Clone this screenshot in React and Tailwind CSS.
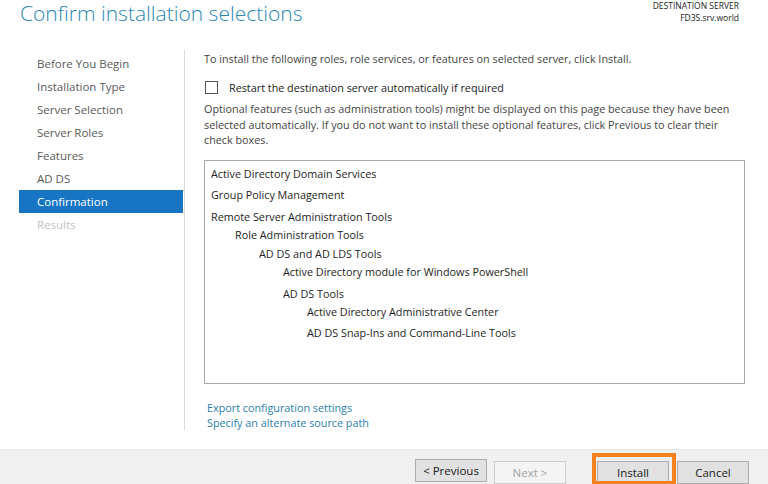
import React from 'react';

// wizard steps on the left
const STEPS = [
  { label: 'Before You Begin' },
  { label: 'Installation Type' },
  { label: 'Server Selection' },
  { label: 'Server Roles' },
  { label: 'Features' },
  { label: 'AD DS' },
  { label: 'Confirmation', active: true },
  { label: 'Results', disabled: true },
];

// features to install, level = indent depth, mt = space above
const FEATURES = [
  { text: 'Active Directory Domain Services', level: 0, mt: 'mt-0' },
  { text: 'Group Policy Management', level: 0, mt: 'mt-[6px]' },
  { text: 'Remote Server Administration Tools', level: 0, mt: 'mt-[6px]' },
  { text: 'Role Administration Tools', level: 1, mt: 'mt-[3px]' },
  { text: 'AD DS and AD LDS Tools', level: 2, mt: 'mt-[3px]' },
  { text: 'Active Directory module for Windows PowerShell', level: 3, mt: 'mt-[3px]' },
  { text: 'AD DS Tools', level: 3, mt: 'mt-[6px]' },
  { text: 'Active Directory Administrative Center', level: 4, mt: 'mt-[3px]' },
  { text: 'AD DS Snap-Ins and Command-Line Tools', level: 4, mt: 'mt-[5px]' },
];

const INDENT = ['pl-0', 'pl-[24px]', 'pl-[48px]', 'pl-[72px]', 'pl-[96px]'];

const font = { fontFamily: '"Segoe UI", "Open Sans", "Noto Sans", sans-serif' };

function WizardButton({ children, disabled }) {
  return (
    <button
      className={
        disabled
          ? 'w-[72px] h-[23px] border border-[#cccccc] bg-[#f4f4f4] text-[#a3a3a3] text-[11.5px] leading-none'
          : 'w-[72px] h-[23px] border border-[#adadad] bg-[#e1e1e1] text-[#1a1a1a] text-[11.5px] leading-none'
      }
    >
      {children}
    </button>
  );
}

export default function App() {
  return (
    <div
      className="w-[768px] h-[484px] bg-white flex flex-col overflow-hidden text-[#333333]"
      style={font}
    >
      {/* header */}
      <div className="h-[50px] flex justify-between">
        <h1 className="pl-[20px] pt-[0px] text-[21px] leading-[26px] font-light text-[#2a87b5]">
          Confirm installation selections
        </h1>
        <div className="pr-[29px] text-right text-[8.5px] leading-[12px] text-[#222222]">
          <div>DESTINATION SERVER</div>
          <div>FD3S.srv.world</div>
        </div>
      </div>

      {/* body */}
      <div className="flex-1 flex">
        <div className="w-[185px] pl-[19px] pt-[2px] mb-[19px] border-r border-[#dcdcdc]">
          {STEPS.map(s => (
            <div
              key={s.label}
              className={
                s.active
                  ? 'w-[164px] h-[23px] pl-[18px] leading-[23px] text-[11.5px] bg-[#1775c4] text-white'
                  : s.disabled
                    ? 'w-[164px] h-[23px] pl-[18px] leading-[23px] text-[11.5px] text-[#c2c2c2]'
                    : 'w-[164px] h-[23px] pl-[18px] leading-[23px] text-[11.5px] text-[#5a5a5a]'
              }
            >
              {s.label}
            </div>
          ))}
        </div>

        <div className="flex-1 pl-[19px] pr-[23px] pt-[1px] text-[10.8px] leading-[15.5px] text-[#444444]">
          <p>To install the following roles, role services, or features on selected server, click Install.</p>

          <label className="mt-[13px] flex items-center">
            <span className="ml-[1px] w-[13px] h-[13px] border border-[#555555] bg-white" />
            <span className="ml-[11px] text-[#222222]">Restart the destination server automatically if required</span>
          </label>

          <p className="mt-[6px] pr-[6px]">
            Optional features (such as administration tools) might be displayed on this page because they have been
            selected automatically. If you do not want to install these optional features, click Previous to clear their
            check boxes.
          </p>

          <div className="mt-[12px] h-[224px] border border-[#a8a8a8] pl-[6px] pt-[5px] text-[#1e1e1e]">
            {FEATURES.map(f => (
              <div key={f.text} className={`${f.mt} ${INDENT[f.level]}`}>
                {f.text}
              </div>
            ))}
          </div>

          <div className="mt-[16px] pl-[3px] text-[#2a7fae]">
            <div>Export configuration settings</div>
            <div>Specify an alternate source path</div>
          </div>
        </div>
      </div>

      {/* footer */}
      <div className="h-[35px] bg-[#f0f0f0] border-t border-[#e6e6e6] flex justify-end items-start pt-[9px] pr-[19px]">
        <WizardButton>&lt; Previous</WizardButton>
        <div className="ml-[7px]">
          <WizardButton disabled>Next &gt;</WizardButton>
        </div>
        <div className="relative ml-[31px]">
          <WizardButton>Install</WizardButton>
          <div className="absolute -left-[5px] -top-[6px] w-[84px] h-[32px] border-[4px] border-[#f5821f]" />
        </div>
        <div className="ml-[8px]">
          <WizardButton>Cancel</WizardButton>
        </div>
      </div>
    </div>
  );
}
